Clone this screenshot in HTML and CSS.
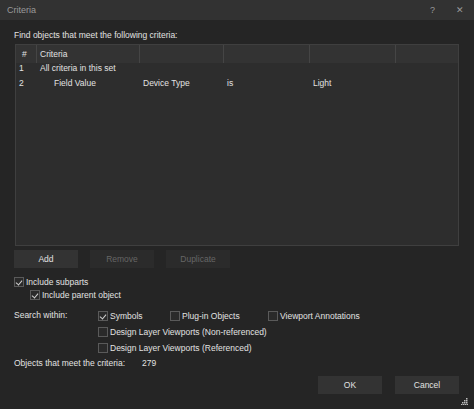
FILE: index.html
```html
<!DOCTYPE html>
<html lang="en">
  <head>
    <meta charset="UTF-8" />
    <title>Criteria</title>
    <link rel="stylesheet" href="styles.css">
  </head>
  <body>
    <div class="dialog">
      <div class="titlebar">
        <span class="title">Criteria</span>
        <span class="help">?</span>
        <span class="close">&#x2715;</span>
      </div>

      <div class="content">
        <p class="intro">Find objects that meet the following criteria:</p>

        <div class="table">
          <div class="row head">
            <div>#</div>
            <div>Criteria</div>
            <div></div>
            <div></div>
            <div></div>
            <div></div>
          </div>
          <div class="row">
            <div>1</div>
            <div class="wide">All criteria in this set</div>
          </div>
          <div class="row">
            <div>2</div>
            <div class="indent">Field Value</div>
            <div>Device Type</div>
            <div>is</div>
            <div>Light</div>
            <div></div>
          </div>
        </div>

        <div class="actions">
          <button class="btn">Add</button>
          <button class="btn" disabled>Remove</button>
          <button class="btn" disabled>Duplicate</button>
        </div>

        <label class="check"><span class="box on"></span>Include subparts</label>
        <label class="check sub"><span class="box on"></span>Include parent object</label>

        <div class="search">
          <span class="label">Search within:</span>
          <div class="options">
            <div class="opt-row">
              <label class="check symbols"><span class="box on"></span>Symbols</label>
              <label class="check plugin"><span class="box"></span>Plug-in Objects</label>
              <label class="check"><span class="box"></span>Viewport Annotations</label>
            </div>
            <label class="check"><span class="box"></span>Design Layer Viewports (Non-referenced)</label>
            <label class="check"><span class="box"></span>Design Layer Viewports (Referenced)</label>
          </div>
        </div>

        <div class="count">
          <span class="label">Objects that meet the criteria:</span>
          <span>279</span>
        </div>

        <div class="footer">
          <button class="btn">OK</button>
          <button class="btn">Cancel</button>
        </div>
      </div>

      <svg class="grip" width="7" height="7" viewBox="0 0 7 7">
        <rect x="5" y="0" width="1.5" height="1.5" fill="#bbb" />
        <rect x="3" y="2" width="1.5" height="1.5" fill="#bbb" />
        <rect x="5" y="2" width="1.5" height="1.5" fill="#bbb" />
        <rect x="1" y="4" width="1.5" height="1.5" fill="#bbb" />
        <rect x="3" y="4" width="1.5" height="1.5" fill="#bbb" />
        <rect x="5" y="4" width="1.5" height="1.5" fill="#bbb" />
        <rect x="0" y="6" width="1.5" height="1" fill="#bbb" />
        <rect x="2" y="6" width="1.5" height="1" fill="#bbb" />
        <rect x="4" y="6" width="1.5" height="1" fill="#bbb" />
        <rect x="6" y="6" width="1" height="1" fill="#bbb" />
      </svg>
    </div>
  </body>
</html>
```

FILE: styles.css
```css
* {
  margin: 0;
  padding: 0;
  box-sizing: border-box;
}
body {
  background-color: #252525;
  color: #e2e2e2;
  font-family: "Liberation Sans", Arial, sans-serif;
  font-size: 8.5px;
  width: 474px;
  height: 409px;
  overflow: hidden;
}
.dialog {
  position: relative;
  height: 409px;
}
.titlebar {
  display: flex;
  align-items: center;
  height: 20px;
  background: #323232;
  padding-left: 7px;
}
.title {
  flex: 1;
  color: #9a9a9a;
  font-size: 9px;
}
.help,
.close {
  color: #9a9a9a;
  font-size: 9px;
}
.help {
  margin-right: 21px;
}
.close {
  margin-right: 10px;
}
.content {
  padding: 0 15px 0 14px;
}
.intro {
  margin-top: 9px;
  height: 13px;
  line-height: 13px;
}
.table {
  margin-top: 2px;
  margin-left: 1px;
  height: 202px;
  border: 1px solid #3f3f3f;
  background: #2d2d2d;
}
.row {
  display: grid;
  grid-template-columns: 21px 103px 84px 86px 86px 1fr;
  height: 15px;
  line-height: 11px;
}
.row > div {
  padding-left: 3px;
  white-space: nowrap;
}
.row.head {
  height: 18px;
  line-height: 18px;
  background: #333333;
}
.row.head > div {
  border-right: 1px solid #454545;
}
.row.head > div:first-child {
  padding-left: 6px;
}
.row.head > div:last-child {
  border-right: none;
}
.row .wide {
  grid-column: 2 / 7;
}
.row .indent {
  padding-left: 17px;
}
.actions {
  display: flex;
  gap: 12px;
  margin-top: 4px;
}
.btn {
  width: 64px;
  height: 18px;
  border: none;
  background: #333333;
  color: #e2e2e2;
  font-family: "Liberation Sans", Arial, sans-serif;
  font-size: 8.5px;
}
.btn:disabled {
  background: #2b2b2b;
  color: #666666;
}
.check {
  display: flex;
  align-items: center;
  height: 13px;
  white-space: nowrap;
}
.box {
  width: 10px;
  height: 10px;
  border: 1px solid #5a5a5a;
  background: #2a2a2a;
  margin-right: 2px;
  position: relative;
}
.box.on::after {
  content: "";
  position: absolute;
  left: 2px;
  top: 1px;
  width: 3px;
  height: 5px;
  border-right: 1px solid #d0d0d0;
  border-bottom: 1px solid #d0d0d0;
  transform: rotate(40deg);
}
.actions + .check {
  margin-top: 7px;
}
.check.sub {
  margin-left: 16px;
}
.search {
  display: flex;
  margin-top: 8px;
}
.search .label {
  width: 84px;
  line-height: 13px;
}
.options {
  display: flex;
  flex-direction: column;
  gap: 3px;
}
.opt-row {
  display: flex;
}
.symbols {
  width: 72px;
}
.plugin {
  width: 98px;
}
.count {
  display: flex;
  margin-top: 3px;
  line-height: 13px;
}
.count .label {
  width: 128px;
}
.footer {
  display: flex;
  justify-content: flex-end;
  gap: 13px;
  margin-top: 6px;
}
.grip {
  position: absolute;
  right: 6px;
  bottom: 4px;
}
```
